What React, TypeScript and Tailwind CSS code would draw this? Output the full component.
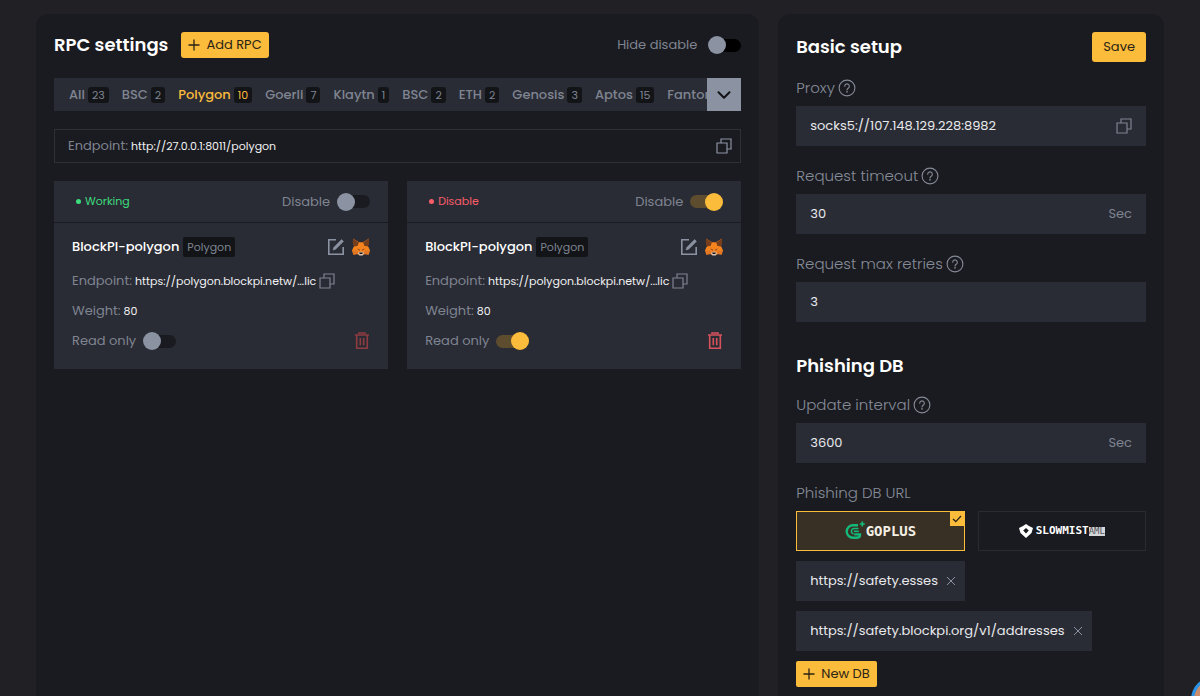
import React, { useState } from "react";

const chains = [
  { name: "All", count: 23 },
  { name: "BSC", count: 2 },
  { name: "Polygon", count: 10 },
  { name: "Goerli", count: 7 },
  { name: "Klaytn", count: 1 },
  { name: "BSC", count: 2 },
  { name: "ETH", count: 2 },
  { name: "Genosis", count: 3 },
  { name: "Aptos", count: 15 },
  { name: "Fantom", count: 4 },
];

const nodes = [
  { id: "node-1", disabled: false, readOnly: false },
  { id: "node-2", disabled: true, readOnly: true },
];

const customUrls = [
  "https://safety.esses",
  "https://safety.blockpi.org/v1/addresses",
];

function CopyIcon() {
  return (
    <svg className="size-4" viewBox="0 0 16 16" fill="none" stroke="currentColor" strokeWidth="1.2">
      <path d="M1 5h10v10H1z" />
      <path d="M5 5V1h10v10h-4" />
    </svg>
  );
}

function PlusIcon() {
  return (
    <svg className="size-3" viewBox="0 0 12 12" fill="none" stroke="currentColor" strokeWidth="1.3">
      <path d="M6 0.5v11M0.5 6h11" />
    </svg>
  );
}

function HelpIcon() {
  return (
    <svg className="size-[18px]" viewBox="0 0 18 18" fill="none" stroke="currentColor" strokeWidth="1.1">
      <circle cx="9" cy="9" r="7.9" />
      <path d="M6.7 7.2a2.3 2.3 0 1 1 3.5 2c-.8.5-1.2.9-1.2 1.8" strokeLinecap="round" />
      <circle cx="9" cy="12.9" r="0.8" fill="currentColor" stroke="none" />
    </svg>
  );
}

function EditIcon() {
  return (
    <svg className="size-[18px]" viewBox="0 0 18 18" fill="none" stroke="currentColor" strokeWidth="1.6">
      <path d="M9 1.8H1.8v14.4h14.4V9" />
      <path d="M6 12 6.8 9.400 14.600 1.600l1.800 1.800L8.600 11.200z" fill="currentColor" strokeWidth="0.6" />
    </svg>
  );
}

function TrashIcon() {
  return (
    <svg className="h-[18px] w-4" viewBox="0 0 16 18" fill="none" stroke="currentColor" strokeWidth="1.6">
      <path d="M1 3h14M5 2V1h6v1M2.700 3v13.200h10.600V3M6.300 6v7.200M9.700 6v7.200" />
    </svg>
  );
}

function FoxIcon() {
  return (
    <svg className="size-[18px]" viewBox="0 0 36 36">
      <path d="M2 1l13 8h6l13-8-2 17H4z" fill="#e27625" />
      <path d="M2 1l12 8.500L12 16l-8 1-2.500-8zM34 1 22 9.500 24 16l8 1 2.500-8z" fill="#763e1a" />
      <path d="M14 9h8l3 7 8 2 3 7-2.500 8-7.500-1-4 2h-8l-4-2-7.500 1L0 25l3-7 8-2z" fill="#f5841f" />
      <path d="M2 25h9l1 7-9.500 1.500zM34 25h-9l-1 7 9.500 1.500z" fill="#e27625" />
      <path d="M10 21l5 1.500 1 3.500zM26 21l-5 1.500-1 3.500z" fill="#7a3c22" />
      <path d="M12 30l3-2.500h6l3 2.500-2.500 5h-7z" fill="#d7c1b3" />
      <path d="M14.500 29h7l-.8 3.200h-5.400z" fill="#1d1613" />
    </svg>
  );
}

function Toggle(props: React.InputHTMLAttributes<HTMLInputElement> & { dark?: boolean }) {
  const { dark, ...rest } = props;
  return (
    <input
      type="checkbox"
      className={`flex h-[13px] w-[33px] shrink-0 cursor-pointer appearance-none items-center rounded-full before:block before:size-[18px] before:shrink-0 before:rounded-full before:bg-[#8b93a3] checked:justify-end checked:bg-[#5d4c2e] checked:before:bg-[#fbbb3b] ${
        dark ? "bg-black" : "bg-[#1a1b20]"
      }`}
      {...rest}
    />
  );
}

function ChainTabs() {
  const [active, setActive] = useState(2);

  return (
    <div className="mt-5 flex h-[33px] bg-[#2a2c35]">
      <div className="flex min-w-0 flex-1 items-center gap-[13px] overflow-hidden pl-[15px]">
        {chains.map((chain, index) => (
          <button
            key={index}
            onClick={() => setActive(index)}
            className={`flex shrink-0 items-center gap-[3px] text-[13px] leading-4 font-medium ${
              active === index ? "text-[#fbbb3b]" : "text-[#7f8491]"
            }`}
          >
            {chain.name}
            <span className="rounded-[3px] bg-[#131417] px-1 text-[11px] leading-4 font-normal">
              {chain.count}
            </span>
          </button>
        ))}
      </div>
      <button
        aria-label="Show all chains"
        className="flex w-[34px] shrink-0 items-center justify-center bg-[#8b93a3] text-[#131417]"
      >
        <svg className="h-2 w-[14px]" viewBox="0 0 14 8" fill="none" stroke="currentColor" strokeWidth="2" strokeLinecap="round" strokeLinejoin="round">
          <path d="M1.500 1.200 7 6.700l5.500-5.500" />
        </svg>
      </button>
    </div>
  );
}

function NodeCard({ node }: { node: (typeof nodes)[number] }) {
  const [disabled, setDisabled] = useState(node.disabled);
  const [readOnly, setReadOnly] = useState(node.readOnly);

  return (
    <article className="bg-[#2a2c35] text-[13px] text-[#7f8491]">
      <div className="flex h-[42px] items-center justify-between border-b border-[#1a1b20] pr-[18px] pl-[22px]">
        <div
          className={`flex items-center gap-1 text-[11px] ${
            disabled ? "text-[#fb5c69]" : "text-[#3ddc7d]"
          }`}
        >
          <span className="size-[5px] rounded-full bg-current" />
          {disabled ? "Disable" : "Working"}
        </div>
        <label className="flex items-center gap-[7px]">
          Disable
          <Toggle checked={disabled} onChange={() => setDisabled(!disabled)} />
        </label>
      </div>
      <div className="px-[18px] pt-[14px] pb-[18px]">
        <div className="flex h-5 items-center justify-between">
          <div className="flex items-center gap-1">
            <h2 className="font-medium text-white">BlockPI-polygon</h2>
            <span className="rounded-[2px] bg-[#131417] px-1 text-[11px] leading-5">Polygon</span>
          </div>
          <div className="flex items-center gap-[7px]">
            <button aria-label="Edit" className="text-[#8b93a3]">
              <EditIcon />
            </button>
            <button aria-label="Add to MetaMask">
              <FoxIcon />
            </button>
          </div>
        </div>
        <div className="mt-[14px] flex h-5 items-center gap-[3px]">
          Endpoint:
          <span className="text-[11px] text-[#f1f1f3]">https://polygon.blockpi.netw/...lic</span>
          <button aria-label="Copy endpoint">
            <CopyIcon />
          </button>
        </div>
        <div className="mt-2.5 flex h-5 items-center gap-[3px]">
          Weight: <span className="text-[11px] text-[#f1f1f3]">80</span>
        </div>
        <div className="mt-2.5 flex h-5 items-center justify-between">
          <label className="flex items-center gap-[7px]">
            Read only
            <Toggle checked={readOnly} onChange={() => setReadOnly(!readOnly)} />
          </label>
          <button
            aria-label="Delete"
            className={disabled ? "text-[#d8525c]" : "text-[#8f3b41]"}
          >
            <TrashIcon />
          </button>
        </div>
      </div>
    </article>
  );
}

function Field(props: {
  id: string;
  label: string;
  value: string;
  className: string;
  children?: React.ReactNode;
}) {
  return (
    <div className={props.className}>
      <label
        htmlFor={props.id}
        className="flex h-5 items-center gap-[3px] text-[15px] font-light text-[#868b98]"
      >
        {props.label}
        <HelpIcon />
      </label>
      <div className="mt-2 flex h-10 items-center bg-[#2a2c35] px-[14px] text-[13px] text-[#7f8491]">
        <input
          id={props.id}
          defaultValue={props.value}
          className="min-w-0 flex-1 bg-transparent text-[#e8e9ec] outline-none"
        />
        {props.children}
      </div>
    </div>
  );
}

function GoPlusLogo() {
  return (
    <span className="flex items-center gap-px font-['DejaVu_Sans_Mono',monospace] text-sm font-bold text-[#f3efe4]">
      <svg className="size-5" viewBox="0 0 20 20" fill="none" stroke="#14b87a" strokeWidth="2.400">
        <path d="M13 4.200H8A5.900 5.900 0 0 0 8 16.800h3.200c2.400 0 3.800-1.400 3.800-3.400H9.200" />
        <path d="M13.500 7.400H9a2.800 2.800 0 0 0-.5 5.500" strokeWidth="1.500" />
        <path d="M13.800 10.300H8.800" strokeWidth="1.600" />
        <path d="M17.300 0.500v5M14.800 3h5" strokeWidth="1.700" />
      </svg>
      GOPLUS
    </span>
  );
}

function SlowMistLogo() {
  return (
    <span className="flex items-center font-['DejaVu_Sans_Mono',monospace] text-[11px] font-bold text-white">
      <svg className="mr-[3px] size-[14px]" viewBox="0 0 14 14">
        <path
          d="M7 0l3 2 4 2-1.500 5L7 14 1.500 9 0 4l4-2zM7 4 4.200 6.600 7 9.400l2.800-2.800z"
          fill="currentColor"
          fillRule="evenodd"
        />
      </svg>
      SLOWMIST
      <span className="bg-[#d5d6d9] text-[9px] leading-[9px] font-normal text-[#55575e]">AML</span>
    </span>
  );
}

function BasicSetup() {
  const [goPlus, setGoPlus] = useState(true);
  const [slowMist, setSlowMist] = useState(false);
  const tile =
    "relative flex h-10 cursor-pointer items-center justify-center border has-checked:border-[#fbbb3b] has-checked:bg-[#383025] border-[#292b32]";

  return (
    <section className="rounded-xl rounded-b-none bg-[#1a1b20] px-[18px] pt-[18px] pb-2">
      <div className="flex h-[30px] items-center justify-between">
        <h1 className="text-lg font-semibold text-white">Basic setup</h1>
        <button className="h-[30px] rounded-[3px] bg-[#fbbb3b] px-[11px] text-[13px] text-[#2b2416]">
          Save
        </button>
      </div>
      <Field id="proxy" label="Proxy" value="socks5://107.148.129.228:8982" className="mt-4">
        <button aria-label="Copy proxy">
          <CopyIcon />
        </button>
      </Field>
      <Field id="timeout" label="Request timeout" value="30" className="mt-5">
        Sec
      </Field>
      <Field id="retries" label="Request max retries" value="3" className="mt-5" />

      <h1 className="mt-[30px] text-lg leading-7 font-semibold text-white">Phishing DB</h1>
      <Field id="interval" label="Update interval" value="3600" className="mt-[15px]">
        Sec
      </Field>

      <h2 className="mt-5 text-[15px] leading-5 font-light text-[#868b98]">Phishing DB URL</h2>
      <div className="mt-2 grid grid-cols-2 gap-[13px]">
        <label className={tile}>
          <input
            type="checkbox"
            aria-label="GoPlus"
            className="peer sr-only"
            checked={goPlus}
            onChange={() => setGoPlus(!goPlus)}
          />
          <GoPlusLogo />
          <span className="absolute top-0 right-0 hidden size-[14px] items-center justify-center bg-[#fbbb3b] text-[#2b2416] peer-checked:flex">
            <svg className="size-[10px]" viewBox="0 0 10 10" fill="none" stroke="currentColor" strokeWidth="1.300">
              <path d="M1 5l2.800 2.600L9 2" />
            </svg>
          </span>
        </label>
        <label className={tile}>
          <input
            type="checkbox"
            aria-label="SlowMist AML"
            className="sr-only"
            checked={slowMist}
            onChange={() => setSlowMist(!slowMist)}
          />
          <SlowMistLogo />
        </label>
      </div>
      <div className="mt-2.5 flex flex-col items-start gap-2.5">
        {customUrls.map((url) => (
          <div key={url} className="flex h-10 items-center gap-2 bg-[#2a2c35] pr-[9px] pl-[14px] text-[13px] text-[#e8e9ec]">
            {url}
            <button aria-label={`Remove ${url}`} className="text-[#8b93a3]">
              <svg className="size-[10px]" viewBox="0 0 10 10" fill="none" stroke="currentColor">
                <path d="M1 1l8 8M9 1 1 9" />
              </svg>
            </button>
          </div>
        ))}
        <button className="flex h-[26px] items-center gap-[6px] rounded-[2px] bg-[#fbbb3b] px-[7px] text-[13px] text-[#2b2416]">
          <PlusIcon />
          New DB
        </button>
      </div>
    </section>
  );
}

export default function App() {
  return (
    <div className="grid min-h-screen grid-cols-[minmax(0,15fr)_minmax(0,8fr)] gap-[19px] bg-[#212025] px-9 pt-[14px] font-['Poppins','Inter',sans-serif]">
      <section className="rounded-xl rounded-b-none bg-[#1a1b20] p-[18px]">
        <div className="flex h-[26px] items-center gap-[13px]">
          <h1 className="text-lg font-semibold text-white">RPC settings</h1>
          <button className="flex h-[26px] items-center gap-[6px] rounded-[3px] bg-[#fbbb3b] px-[7px] text-[13px] text-[#2b2416]">
            <PlusIcon />
            Add RPC
          </button>
          <label className="ml-auto flex items-center gap-[11px] text-[13px] text-[#7f8491]">
            Hide disable
            <Toggle dark />
          </label>
        </div>

        <ChainTabs />

        <div className="mt-[18px] flex h-[34px] items-center gap-[3px] border border-[#2e3037] pr-2 pl-[13px] text-[13px] text-[#7f8491]">
          Endpoint:
          <span className="text-[11px] text-[#f1f1f3]">http://27.0.0.1:8011/polygon</span>
          <button aria-label="Copy endpoint" className="ml-auto text-[#8b93a3]">
            <CopyIcon />
          </button>
        </div>

        <div className="mt-[18px] grid grid-cols-2 gap-[19px]">
          {nodes.map((node) => (
            <NodeCard key={node.id} node={node} />
          ))}
        </div>
      </section>

      <BasicSetup />

      <button
        aria-label="Open chat"
        className="fixed -right-[39px] -bottom-[28px] size-12 rounded-full border-3 border-[#2b93e6] bg-[#c98d6e]"
      />
    </div>
  );
}
